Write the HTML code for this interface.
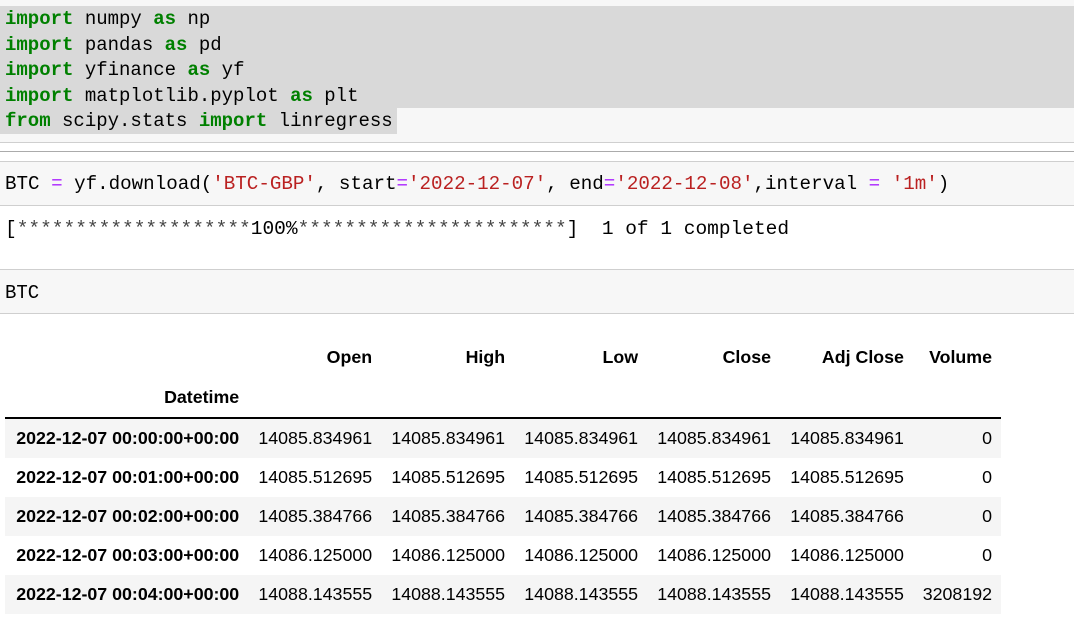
<!DOCTYPE html>
<html><head><meta charset="utf-8"><style>
body{margin:0;width:1074px;height:619px;background:#fff;position:relative;overflow:hidden;font-family:"Liberation Sans",Arial,sans-serif}
.abs{position:absolute}
.code{font-family:"Liberation Mono",monospace;font-size:19px;white-space:pre;color:#000}
.k{color:#008000;font-weight:bold}
.s{color:#ba2121}
.o{color:#aa22ff}
table{position:absolute;left:5px;top:337px;border-collapse:collapse;font-size:17.8px;width:996px}
th,td{text-align:right;padding:0 9px 0 9px;height:39px;white-space:nowrap}
th{font-weight:bold;color:#000}
td{color:#000}
thead tr:last-child th{border-bottom:2px solid #000}
tbody tr:nth-child(odd){background:#f5f5f5}
</style></head><body>
<div class="abs" style="left:0;top:0;width:1074px;height:142px;background:#f7f7f7;border-bottom:1px solid #cfcfcf"></div>
<div class="abs" style="left:0;top:6px;width:1074px;height:102px;background:#d9d9d9"></div>
<div class="abs" style="left:0;top:108px;width:397px;height:26px;background:#d9d9d9"></div>
<div class="abs code" style="left:5px;top:7px;line-height:25.5px"><span class="k">import</span> numpy <span class="k">as</span> np
<span class="k">import</span> pandas <span class="k">as</span> pd
<span class="k">import</span> yfinance <span class="k">as</span> yf
<span class="k">import</span> matplotlib.pyplot <span class="k">as</span> plt
<span class="k">from</span> scipy.stats <span class="k">import</span> linregress</div>
<div class="abs" style="left:0;top:151px;width:1074px;height:1px;background:#ababab"></div>
<div class="abs" style="left:0;top:161px;width:1074px;height:43px;background:#f7f7f7;border-top:1px solid #cfcfcf;border-bottom:1px solid #cfcfcf"></div>
<div class="abs code" style="left:5px;top:172px;line-height:25px;font-size:19.2px">BTC <span class="o">=</span> yf.download(<span class="s">'BTC-GBP'</span>, start<span class="o">=</span><span class="s">'2022-12-07'</span>, end<span class="o">=</span><span class="s">'2022-12-08'</span>,interval <span class="o">=</span> <span class="s">'1m'</span>)</div>
<div class="abs code" style="left:5px;top:217px;line-height:25px;font-size:19.5px">[<span style="color:#444">********************</span>100%<span style="color:#444">***********************</span>]  1 of 1 completed</div>
<div class="abs" style="left:0;top:269px;width:1074px;height:43px;background:#f7f7f7;border-top:1px solid #cfcfcf;border-bottom:1px solid #cfcfcf"></div>
<div class="abs code" style="left:5px;top:281px;line-height:25px">BTC</div>
<table>
<thead>
<tr><th style="height:40px"></th><th>Open</th><th>High</th><th>Low</th><th>Close</th><th>Adj Close</th><th>Volume</th></tr>
<tr><th style="height:40px">Datetime</th><th></th><th></th><th></th><th></th><th></th><th></th></tr>
</thead>
<tbody>
<tr><th>2022-12-07 00:00:00+00:00</th><td>14085.834961</td><td>14085.834961</td><td>14085.834961</td><td>14085.834961</td><td>14085.834961</td><td>0</td></tr>
<tr><th>2022-12-07 00:01:00+00:00</th><td>14085.512695</td><td>14085.512695</td><td>14085.512695</td><td>14085.512695</td><td>14085.512695</td><td>0</td></tr>
<tr><th>2022-12-07 00:02:00+00:00</th><td>14085.384766</td><td>14085.384766</td><td>14085.384766</td><td>14085.384766</td><td>14085.384766</td><td>0</td></tr>
<tr><th>2022-12-07 00:03:00+00:00</th><td>14086.125000</td><td>14086.125000</td><td>14086.125000</td><td>14086.125000</td><td>14086.125000</td><td>0</td></tr>
<tr><th>2022-12-07 00:04:00+00:00</th><td>14088.143555</td><td>14088.143555</td><td>14088.143555</td><td>14088.143555</td><td>14088.143555</td><td>3208192</td></tr>
</tbody>
</table>
</body></html>
